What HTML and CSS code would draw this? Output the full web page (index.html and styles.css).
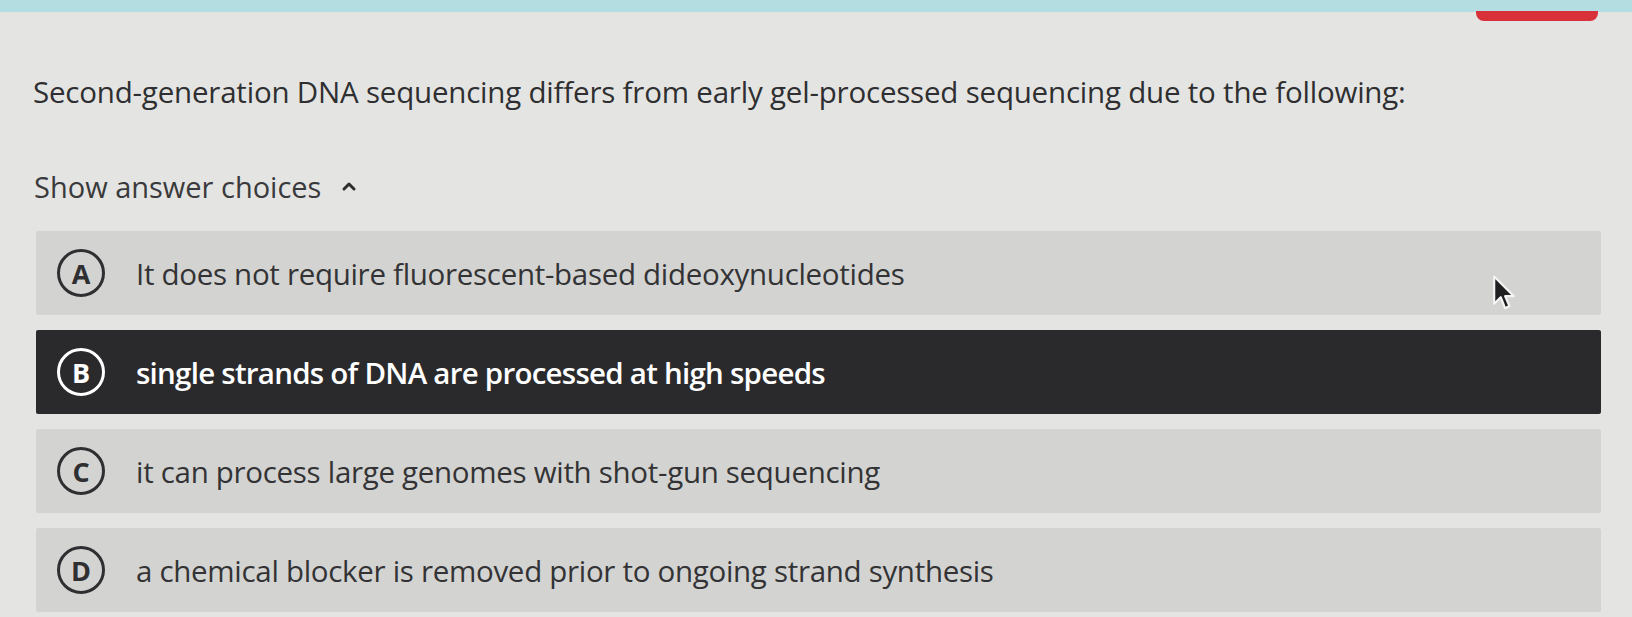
FILE: index.html
```html
<!DOCTYPE html>
<html>
<head>
<meta charset="utf-8">
<link rel="stylesheet" href="styles.css">
</head>
<body>
<div class="topbar"><span class="pill"></span></div>
<main class="page">
  <p class="question">Second-generation DNA sequencing differs from early gel-processed sequencing due to the following:</p>
  <div class="toggle">Show answer choices <svg class="caret" width="16" height="12" viewBox="0 0 16 12"><path d="M3 9 L8 4 L13 9" fill="none" stroke="#2e2e2e" stroke-width="3" stroke-linecap="round" stroke-linejoin="round"/></svg></div>
  <ul class="choices">
    <li class="choice"><span class="letter">A</span><span class="text">It does not require fluorescent-based dideoxynucleotides</span></li>
    <li class="choice selected"><span class="letter">B</span><span class="text">single strands of DNA are processed at high speeds</span></li>
    <li class="choice"><span class="letter">C</span><span class="text">it can process large genomes with shot-gun sequencing</span></li>
    <li class="choice"><span class="letter">D</span><span class="text">a chemical blocker is removed prior to ongoing strand synthesis</span></li>
  </ul>
  <svg class="cursor" width="24" height="40" viewBox="0 0 22 36"><path d="M2 2 L2 27 L8 21 L12 31 L16 29 L12 20 L20 20 Z" fill="#1f1f22" stroke="#f4f4f4" stroke-width="2" stroke-linejoin="round"/></svg>
</main>
</body>
</html>
```
FILE: styles.css
```css
html, body {
  margin: 0;
  padding: 0;
  background: #e4e5e3;
  font-family: "Open Sans", "Liberation Sans", sans-serif;
  color: #333335;
  overflow: hidden;
}
.topbar {
  height: 12px;
  background: #b3dde0;
  position: relative;
}
.pill {
  position: absolute;
  left: 1476px;
  top: 11px;
  width: 122px;
  height: 10px;
  background: #d8313a;
  border-radius: 0 0 8px 8px;
}
.page {
  position: relative;
  padding: 0 31px 0 36px;
}
.question {
  margin: 0 0 0 -3px;
  padding-top: 60px;
  font-size: 29.5px;
  line-height: 40px;
  letter-spacing: -0.2px;
  color: #2f2f31;
}
.toggle {
  margin-top: 56px;
  margin-left: -2px;
  font-size: 29px;
  line-height: 38px;
  letter-spacing: 0;
  color: #3a3a3c;
  display: flex;
  align-items: center;
  gap: 20px;
}
.caret { margin-top: -2px; }
.choices {
  list-style: none;
  margin: 25px 0 0 0;
  padding: 0;
  display: flex;
  flex-direction: column;
  gap: 15px;
}
.choice {
  height: 84px;
  background: #d3d4d2;
  display: flex;
  align-items: center;
  padding-left: 21px;
  gap: 31px;
  border-radius: 2px;
}
.letter {
  flex: none;
  width: 48px;
  height: 48px;
  box-sizing: border-box;
  border: 3px solid #2f2f31;
  border-radius: 50%;
  display: flex;
  align-items: center;
  justify-content: center;
  font-size: 27px;
  font-weight: 700;
  color: #2f2f31;
}
.text {
  font-size: 29.5px;
  letter-spacing: -0.3px;
  color: #333335;
}
.selected {
  background: #2a2a2d;
}
.selected .letter {
  border-color: #ffffff;
  color: #ffffff;
}
.selected .text {
  color: #ffffff;
  font-weight: 600;
  letter-spacing: -0.75px;
}
.cursor {
  position: absolute;
  left: 1492px;
  top: 262px;
}
```
